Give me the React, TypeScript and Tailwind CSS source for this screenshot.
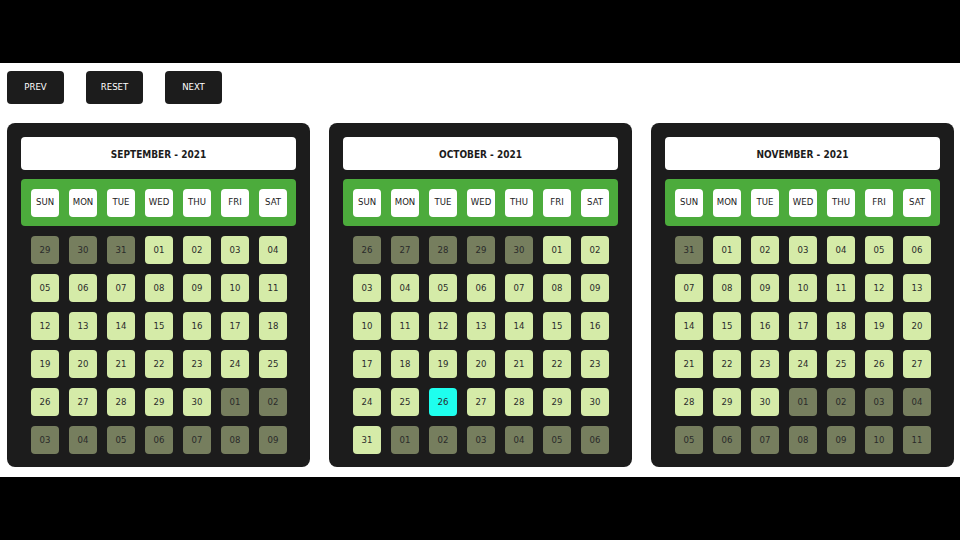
import React from 'react';

type Day = { n: number; dim?: boolean; today?: boolean };

const WEEKDAYS = ['SUN', 'MON', 'TUE', 'WED', 'THU', 'FRI', 'SAT'];

// build 42 cells for a month: year, month index (0-based)
const buildMonth = (year: number, month: number, today?: number): Day[] => {
  const first = new Date(year, month, 1).getDay();
  const daysIn = new Date(year, month + 1, 0).getDate();
  const prevDays = new Date(year, month, 0).getDate();
  const cells: Day[] = [];
  for (let i = first - 1; i >= 0; i--) cells.push({ n: prevDays - i, dim: true });
  for (let d = 1; d <= daysIn; d++) cells.push({ n: d, today: d === today });
  let next = 1;
  while (cells.length < 42) cells.push({ n: next++, dim: true });
  return cells;
};

const MONTHS = [
  { title: 'SEPTEMBER - 2021', days: buildMonth(2021, 8) },
  { title: 'OCTOBER - 2021', days: buildMonth(2021, 9, 26) },
  { title: 'NOVEMBER - 2021', days: buildMonth(2021, 10) },
];

const pad = (n: number) => (n < 10 ? `0${n}` : `${n}`);

const Calendar: React.FC<{ title: string; days: Day[] }> = ({ title, days }) => (
  <div className="w-[303px] shrink-0 rounded-[8px] bg-[#1c1c1c] px-[14px] pt-[14px] pb-[13px]">
    <div className="flex h-[33px] items-center justify-center rounded-[4px] bg-white pt-[1px] text-[10px] font-bold text-[#1c1c1c]">
      {title}
    </div>
    <div className="mt-[9px] flex h-[47px] items-center gap-[10px] rounded-[4px] bg-[#4cab3c] pl-[10px]">
      {WEEKDAYS.map((w) => (
        <div
          key={w}
          className="flex h-[28px] w-[28px] items-center justify-center rounded-[4px] bg-white text-[9.5px] text-[#222]"
        >
          {w}
        </div>
      ))}
    </div>
    <div className="mt-[10px] grid grid-cols-[repeat(7,28px)] gap-[10px] pl-[10px]">
      {days.map((d, i) => (
        <div
          key={i}
          className={
            'flex h-[28px] w-[28px] items-center justify-center rounded-[4px] text-[9.5px] text-[#2a2a2a] ' +
            (d.today ? 'bg-[#1effee]' : d.dim ? 'bg-[#767e5e]' : 'bg-[#d5eba8]')
          }
        >
          {pad(d.n)}
        </div>
      ))}
    </div>
  </div>
);

const App: React.FC = () => {
  return (
    <div
      className="flex h-[540px] w-[960px] flex-col bg-black"
      style={{ fontFamily: '"DejaVu Sans Condensed", "DejaVu Sans", Tahoma, sans-serif' }}
    >
      <div className="h-[63px] shrink-0" />
      <main className="h-[414px] shrink-0 bg-white px-[7px] pt-[8px]">
        <div className="flex gap-[22px]">
          {['PREV', 'RESET', 'NEXT'].map((b) => (
            <button
              key={b}
              className="flex h-[33px] w-[57px] items-center justify-center rounded-[4px] bg-[#1c1c1c] text-[9.5px] text-white"
            >
              {b}
            </button>
          ))}
        </div>
        <div className="mt-[19px] flex gap-[19px]">
          {MONTHS.map((m) => (
            <Calendar key={m.title} title={m.title} days={m.days} />
          ))}
        </div>
      </main>
    </div>
  );
};

export default App;
